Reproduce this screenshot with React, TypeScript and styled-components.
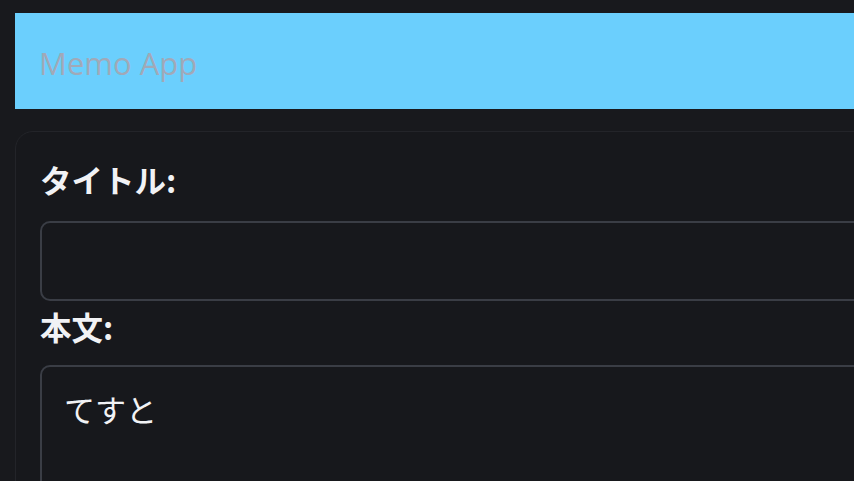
import React, { useState } from "react";
import styled, { createGlobalStyle } from "styled-components";

const GlobalStyle = createGlobalStyle`
  html, body {
    margin: 0;
    padding: 0;
    background: #18191d;
    overflow: hidden;
  }
  body {
    font-family: "Noto Sans", "Noto Sans CJK JP", sans-serif;
  }
`;

const Page = styled.div`
  width: 1200px;
  padding: 13px 0 0 15px;
  display: flex;
  flex-direction: column;
  gap: 22px;
`;

const Header = styled.header`
  height: 96px;
  background: #6bcffd;
  display: flex;
  align-items: center;
  padding-left: 24px;
  padding-top: 4px;
  box-sizing: border-box;
`;

const Title = styled.h1`
  margin: 0;
  font-size: 31px;
  font-weight: 400;
  color: #a1a9b8;
  font-family: "Open Sans", "Noto Sans", sans-serif;
`;

const Card = styled.form`
  border: 1px solid #232429;
  border-radius: 18px;
  padding: 25px 24px 24px;
  background: #17181c;
  display: flex;
  flex-direction: column;
`;

const Label = styled.label<{ $gap: number }>`
  font-family: "Noto Sans CJK JP", "Noto Sans", sans-serif;
  font-size: 31.5px;
  font-weight: 700;
  line-height: 45px;
  color: #f1f2f5;
  margin-bottom: ${(p) => p.$gap}px;
`;

const TextInput = styled.input`
  height: 80px;
  box-sizing: border-box;
  background: transparent;
  border: 2px solid #3a3d45;
  border-radius: 10px;
  margin-bottom: 3px;
  padding: 0 22px;
  font-size: 31px;
  color: #f1f2f5;
  outline: none;
  font-family: "Noto Sans CJK JP", sans-serif;
`;

const TextArea = styled.textarea`
  height: 240px;
  box-sizing: border-box;
  background: transparent;
  border: 2px solid #3a3d45;
  border-radius: 10px;
  padding: 20px 22px;
  font-size: 31px;
  line-height: 1.4;
  color: #f1f2f5;
  outline: none;
  resize: none;
  font-family: "Noto Sans CJK JP", sans-serif;
`;

export default function App() {
  const [title, setTitle] = useState("");
  const [body, setBody] = useState("てすと");
  return (
    <>
      <GlobalStyle />
      <Page>
        <Header>
          <Title>Memo App</Title>
        </Header>
        <Card onSubmit={(e) => e.preventDefault()}>
          <Label $gap={19} htmlFor="title">タイトル:</Label>
          <TextInput id="title" value={title} onChange={(e) => setTitle(e.target.value)} />
          <Label $gap={16} htmlFor="body">本文:</Label>
          <TextArea id="body" value={body} onChange={(e) => setBody(e.target.value)} />
        </Card>
      </Page>
    </>
  );
}
